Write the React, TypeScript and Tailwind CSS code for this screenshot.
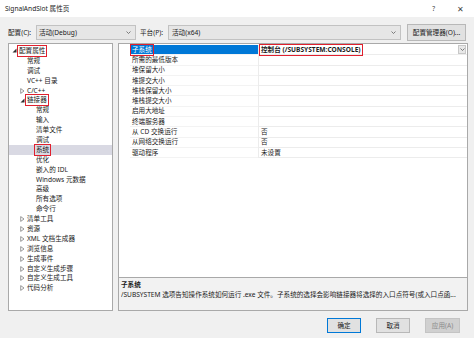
import React from "react";

type TreeItem = { level: 0 | 1 | 2; text: string; exp?: "open" | "closed"; selected?: boolean; red?: boolean };

const tree: TreeItem[] = [
  { level: 0, text: "配置属性", exp: "open", red: true },
  { level: 1, text: "常规" },
  { level: 1, text: "调试" },
  { level: 1, text: "VC++ 目录" },
  { level: 1, text: "C/C++", exp: "closed" },
  { level: 1, text: "链接器", exp: "open", red: true },
  { level: 2, text: "常规" },
  { level: 2, text: "输入" },
  { level: 2, text: "清单文件" },
  { level: 2, text: "调试" },
  { level: 2, text: "系统", selected: true, red: true },
  { level: 2, text: "优化" },
  { level: 2, text: "嵌入的 IDL" },
  { level: 2, text: "Windows 元数据" },
  { level: 2, text: "高级" },
  { level: 2, text: "所有选项" },
  { level: 2, text: "命令行" },
  { level: 1, text: "清单工具", exp: "closed" },
  { level: 1, text: "资源", exp: "closed" },
  { level: 1, text: "XML 文档生成器", exp: "closed" },
  { level: 1, text: "浏览信息", exp: "closed" },
  { level: 1, text: "生成事件", exp: "closed" },
  { level: 1, text: "自定义生成步骤", exp: "closed" },
  { level: 1, text: "自定义生成工具", exp: "closed" },
  { level: 1, text: "代码分析", exp: "closed" },
];

const levelPad: Record<number, string> = { 0: "pl-[3px]", 1: "pl-[11px]", 2: "pl-[20px]" };

const props: { name: string; value?: string }[] = [
  { name: "子系统", value: "控制台 (/SUBSYSTEM:CONSOLE)" },
  { name: "所需的最低版本" },
  { name: "堆保留大小" },
  { name: "堆提交大小" },
  { name: "堆栈保留大小" },
  { name: "堆栈提交大小" },
  { name: "启用大地址" },
  { name: "终端服务器" },
  { name: "从 CD 交换运行", value: "否" },
  { name: "从网络交换运行", value: "否" },
  { name: "驱动程序", value: "未设置" },
];

function Chevron() {
  return (
    <svg width="5" height="3" viewBox="0 0 5 3" className="block">
      <path d="M0.5 0.5 L2.5 2.5 L4.5 0.5" fill="none" stroke="#606060" strokeWidth="0.8" />
    </svg>
  );
}

function Expander({ exp }: { exp?: "open" | "closed" }) {
  if (exp === "open")
    return (
      <svg width="5" height="5" viewBox="0 0 5 5" className="block">
        <polygon points="4.5,0.5 4.5,4.5 0.5,4.5" fill="#303030" />
      </svg>
    );
  if (exp === "closed")
    return (
      <svg width="5" height="6" viewBox="0 0 5 6" className="block">
        <polygon points="0.7,0.6 4,3 0.7,5.4" fill="none" stroke="#707070" strokeWidth="0.7" />
      </svg>
    );
  return null;
}

function RedBox({ children, bold }: { children: React.ReactNode; bold?: boolean }) {
  return (
    <span className={"relative " + (bold ? "font-bold" : "")}>
      {children}
      <span className="absolute -left-[2px] -right-[2px] -top-[1px] -bottom-[1px] border border-[#e0202e]" />
    </span>
  );
}

export default function App() {
  return (
    <div className="w-[474px] h-[338px] overflow-hidden bg-[#f0f0f0] flex flex-col text-[6.6px] text-[#1a1a1a] font-['Noto_Sans','Noto_Sans_CJK_SC',sans-serif]">
      {/* Title bar */}
      <div className="h-[17px] bg-white flex items-center pl-[5px] shrink-0">
        <span>SignalAndSlot 属性页</span>
        <span className="ml-auto text-[#444]">?</span>
        <span className="ml-[22px] mr-[10px] text-[8px] text-[#444]">✕</span>
      </div>

      <div className="flex flex-col pl-[8px] pr-[6px] pt-[7px]">
        {/* Config row */}
        <div className="h-[17px] flex items-center">
          <span className="w-[28px]">配置(C):</span>
          <div className="w-[100px] h-[15px] bg-[#e6e6e6] border border-[#c2c2c2] flex items-center pl-[2px] pr-[4px]">
            <span>活动(Debug)</span>
            <span className="ml-auto">
              <Chevron />
            </span>
          </div>
          <span className="ml-[4px] w-[28px]">平台(P):</span>
          <div className="w-[233px] h-[15px] bg-[#e6e6e6] border border-[#c2c2c2] flex items-center pl-[3px] pr-[4px]">
            <span>活动(x64)</span>
            <span className="ml-auto">
              <Chevron />
            </span>
          </div>
          <div className="ml-[6px] w-[59px] h-[17px] bg-[#e1e1e1] border border-[#b8b8b8] flex items-center justify-center">
            配置管理器(O)...
          </div>
        </div>

        {/* Main area */}
        <div className="mt-[2px] h-[268px] flex gap-[5px]">
          {/* Tree */}
          <div className="w-[105px] bg-white border border-[#a9a9a9] pt-[2px] flex flex-col overflow-hidden">
            {tree.map((t, i) => (
              <div
                key={i}
                className={"h-[9.9px] shrink-0 flex items-center " + levelPad[t.level] + (t.selected ? " bg-[#d9d9e3]" : "")}
              >
                <span className="w-[7px] flex items-center">
                  <Expander exp={t.exp} />
                </span>
                {t.red ? <RedBox>{t.text}</RedBox> : <span>{t.text}</span>}
              </div>
            ))}
          </div>

          {/* Right side */}
          <div className="flex-1 flex flex-col">
            <div className="h-[235px] bg-white border border-[#a9a9a9] pt-[1px] flex flex-col">
              {props.map((p, i) => (
                <div key={i} className="h-[10.3px] shrink-0 flex">
                  <div className="w-[11px] shrink-0" />
                  <div
                    className={
                      "w-[128px] shrink-0 flex items-center pl-[2px] border-b border-[#f3f3f3] " +
                      (i === 0 ? "bg-[#0078d7] text-white" : "")
                    }
                  >
                    {i === 0 ? <RedBox>{p.name}</RedBox> : p.name}
                  </div>
                  <div className="flex-1 flex items-center pl-[2px] border-l border-b border-[#ececec]">
                    {i === 0 ? <RedBox bold>{p.value}</RedBox> : p.value}
                    {i === 0 && (
                      <div className="ml-auto mr-[1px] w-[8px] h-[9px] bg-[#e8e8e8] border border-[#c8c8c8] flex items-center justify-center">
                        <Chevron />
                      </div>
                    )}
                  </div>
                </div>
              ))}
            </div>
            <div className="h-[33px] bg-[#f2f2f2] border border-t-0 border-[#a9a9a9] pl-[2px] pt-[2px] flex flex-col">
              <div className="h-[10px] flex items-center font-bold">子系统</div>
              <div className="h-[10px] flex items-center whitespace-nowrap overflow-hidden">
                /SUBSYSTEM 选项告知操作系统如何运行 .exe 文件。子系统的选择会影响链接器将选择的入口点符号(或入口点函...
              </div>
            </div>
          </div>
        </div>
      </div>

      {/* Buttons */}
      <div className="mt-[7px] h-[15px] flex justify-end pr-[14px] gap-[15px]">
        <div className="w-[34px] h-[15px] bg-[#e1e1e1] border border-[#0078d7] flex items-center justify-center">确定</div>
        <div className="w-[34px] h-[15px] bg-[#e1e1e1] border border-[#b8b8b8] flex items-center justify-center">取消</div>
        <div className="w-[35px] h-[15px] bg-[#d0d0d0] border border-[#c4c4c4] text-[#8a8a8a] flex items-center justify-center">应用(A)</div>
      </div>
    </div>
  );
}
